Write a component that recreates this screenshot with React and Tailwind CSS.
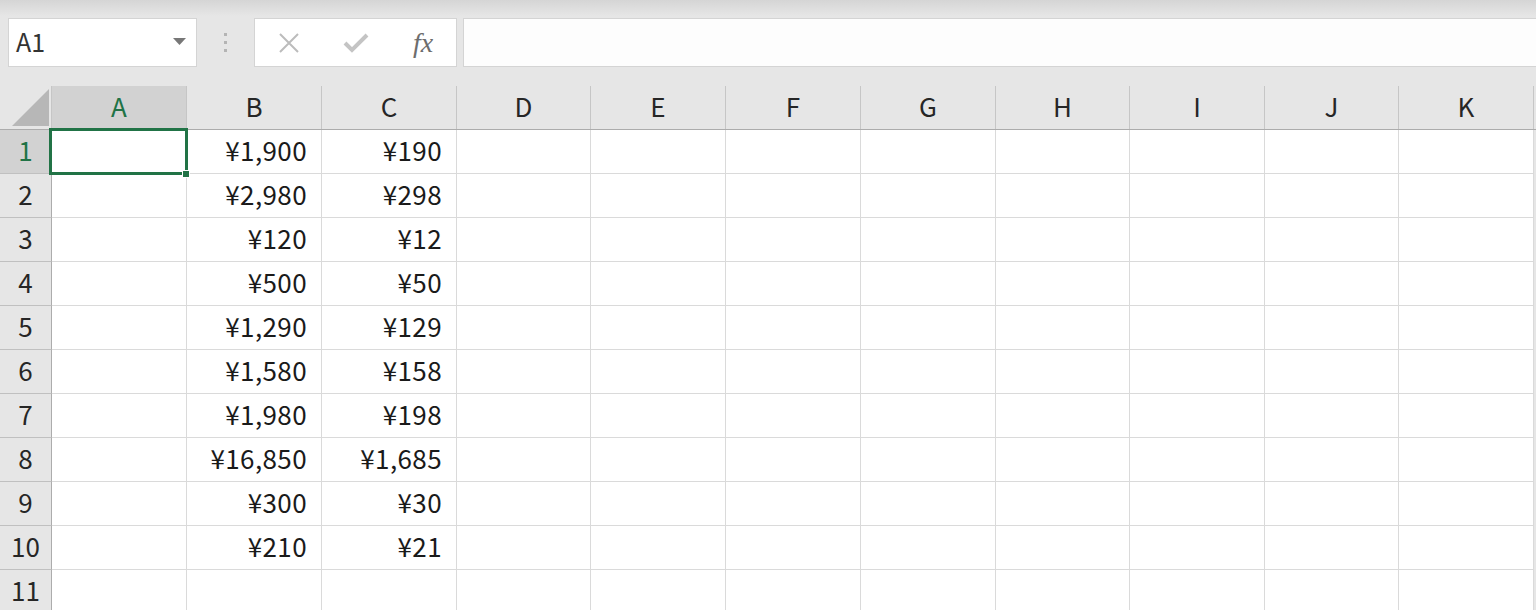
import React from 'react';

const font = "font-['Yu_Gothic','Noto_Sans_CJK_JP','Noto_Sans',sans-serif]";

const columns = [
  { name: 'A', w: 'w-[135px]' },
  { name: 'B', w: 'w-[135px]' },
  { name: 'C', w: 'w-[135px]' },
  { name: 'D', w: 'w-[134px]' },
  { name: 'E', w: 'w-[135px]' },
  { name: 'F', w: 'w-[135px]' },
  { name: 'G', w: 'w-[135px]' },
  { name: 'H', w: 'w-[134px]' },
  { name: 'I', w: 'w-[135px]' },
  { name: 'J', w: 'w-[134px]' },
  { name: 'K', w: 'w-[135px]' },
];

// B = price, C = 10%
const data = [
  ['¥1,900', '¥190'],
  ['¥2,980', '¥298'],
  ['¥120', '¥12'],
  ['¥500', '¥50'],
  ['¥1,290', '¥129'],
  ['¥1,580', '¥158'],
  ['¥1,980', '¥198'],
  ['¥16,850', '¥1,685'],
  ['¥300', '¥30'],
  ['¥210', '¥21'],
  ['', ''],
];

function Toolbar() {
  return (
    <div className="h-[86px] flex items-start pt-[18px] pl-[8px] bg-[linear-gradient(to_bottom,#d5d5d5_0px,#e6e6e6_16px)]">
      <div className="w-[189px] h-[49px] bg-white border border-[#d4d4d4] flex items-center pl-[7px] pr-[10px] pb-[2px]">
        <span className="text-[25px] text-[#333] flex-1 leading-none">A1</span>
        <svg width="13" height="7" viewBox="0 0 13 7">
          <path d="M0 0 L13 0 L6.5 7 Z" fill="#777" />
        </svg>
      </div>
      <div className="w-[57px] h-[49px] flex flex-col items-center justify-center gap-[5px]">
        <div className="w-[3px] h-[3px] bg-[#b4b4b4]" />
        <div className="w-[3px] h-[3px] bg-[#b4b4b4]" />
        <div className="w-[3px] h-[3px] bg-[#b4b4b4]" />
      </div>
      <div className="w-[203px] h-[49px] bg-white border border-[#d4d4d4] flex items-center">
        <div className="w-[68px] flex justify-center">
          <svg width="22" height="22" viewBox="0 0 22 22">
            <path d="M2 2 L20 20 M20 2 L2 20" stroke="#bcbcbc" strokeWidth="2" />
          </svg>
        </div>
        <div className="w-[68px] flex justify-center">
          <svg width="26" height="22" viewBox="0 0 26 22">
            <path d="M2 11 L9 18 L24 3" stroke="#c4c4c4" strokeWidth="4" fill="none" />
          </svg>
        </div>
        <div className="w-[66px] flex justify-center">
          <span className="font-['Liberation_Serif',serif] italic text-[28px] text-[#6d6d6d] leading-none">fx</span>
        </div>
      </div>
      <div className="ml-[6px] flex-1 h-[49px] bg-[#fdfdfd] border border-[#d4d4d4] -mr-[2px]" />
    </div>
  );
}

function HeaderRow() {
  return (
    <div className="flex h-[44px] border-b border-[#acacac]">
      <div className="w-[52px] shrink-0 border-r border-[#c6c6c6] flex items-end justify-end pr-[2px] pb-[3px]">
        <svg width="37" height="37" viewBox="0 0 37 37">
          <path d="M0 37 L37 37 L37 0 Z" fill="#b7b7b7" />
        </svg>
      </div>
      {columns.map((c, i) => (
        <div
          key={c.name}
          className={`${c.w} shrink-0 border-r border-[#c6c6c6] flex items-center justify-center pb-[3px] text-[26px] leading-none ${
            i === 0 ? 'bg-[#d2d2d2] text-[#217346]' : 'text-[#262626]'
          }`}
        >
          {c.name}
        </div>
      ))}
    </div>
  );
}

function Row({ index, values }) {
  const active = index === 1;
  return (
    <div className="flex h-[44px]">
      <div
        className={`w-[52px] shrink-0 border-r border-b border-r-[#acacac] border-b-[#c0c0c0] flex items-center justify-center pb-[4px] text-[26px] leading-none ${
          active ? 'bg-[#d2d2d2] text-[#217346]' : 'bg-[#e6e6e6] text-[#262626]'
        }`}
      >
        {index}
      </div>
      {columns.map((c, i) => {
        let text = '';
        if (i === 1) text = values[0];
        if (i === 2) text = values[1];
        return (
          <div
            key={c.name}
            className={`${c.w} shrink-0 bg-white border-r border-b border-[#dadada] flex items-center justify-end pr-[14px] pb-[4px] text-[26px] tracking-[0.4px] leading-none text-[#1a1a1a]`}
          >
            {text}
          </div>
        );
      })}
    </div>
  );
}

export default function App() {
  return (
    <div className={`w-[1536px] h-[610px] overflow-hidden bg-[#e6e6e6] ${font}`}>
      <Toolbar />
      <div className="relative">
        <HeaderRow />
        {data.map((v, i) => (
          <Row key={i} index={i + 1} values={v} />
        ))}
        {/* active cell A1 */}
        <div className="absolute left-[49px] top-[42px] w-[139px] h-[47px] border-[3px] border-[#217346]" />
        <div className="absolute left-[182px] top-[84px] w-[8px] h-[8px] bg-[#217346] border border-white" />
      </div>
    </div>
  );
}
